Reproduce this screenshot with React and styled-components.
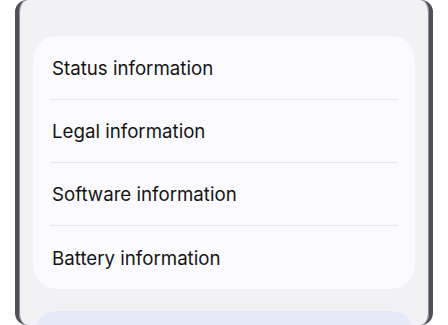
import styled, { createGlobalStyle } from 'styled-components'

const GlobalStyle = createGlobalStyle`
  html, body {
    margin: 0;
    padding: 0;
    background: #ffffff;
    overflow: hidden;
  }
  body {
    font-family: Inter, Roboto, "Noto Sans", "Liberation Sans", sans-serif;
  }
`

const Phone = styled.div`
  margin: 0 15px;
  height: 325px;
  box-sizing: border-box;
  border-left: 4px solid #50505c;
  border-right: 4px solid #50505c;
  border-radius: 12px;
  background: #f2f2f4;
  box-shadow: inset 1px 0 0 #8d8d98, inset -1px 0 0 #8d8d98;
  padding: 36px 14px 0;
  overflow: hidden;
  display: flex;
  flex-direction: column;
  gap: 22px;
`

const Card = styled.div`
  background: ${p => p.$tint || '#fbfbfd'};
  border-radius: 24px;
  padding: 0 17px;
  display: flex;
  flex-direction: column;
  flex-shrink: 0;
  min-height: ${p => p.$minHeight || 'auto'};
`

const Row = styled.div`
  box-sizing: border-box;
  height: 63px;
  display: flex;
  align-items: center;
  padding-left: 2px;
  padding-top: 1px;
  font-size: 18.7px;
  color: #141414;
  & + & {
    border-top: 1px solid #e7e7eb;
  }
  &:last-child {
    height: 64px;
  }
`

const items = [
  'Status information',
  'Legal information',
  'Software information',
  'Battery information',
]

export default function App() {
  return (
    <>
      <GlobalStyle />
      <Phone>
        <Card>
          {items.map(label => (
            <Row key={label}>{label}</Row>
          ))}
        </Card>
        <Card $tint="#e4e9f5" $minHeight="60px" />
      </Phone>
    </>
  )
}
